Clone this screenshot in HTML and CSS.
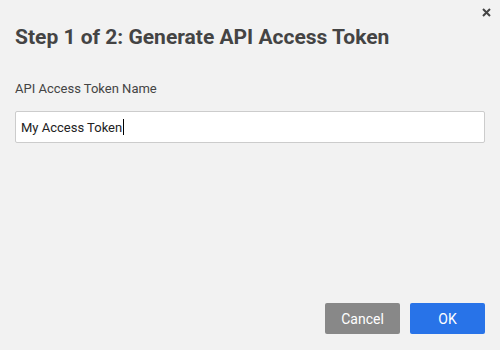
FILE: index.html
```html
<!DOCTYPE html>
<html lang="en">
<head>
  <meta charset="UTF-8" />
  <title>Generate API Access Token</title>
  <link rel="stylesheet" href="styles.css">
</head>
<body>

  <div class="dialog">
    <button class="close" aria-label="Close">
      <svg width="9" height="9" viewBox="0 0 9 9">
        <path d="M1 1 L8 8 M8 1 L1 8" stroke="#444" stroke-width="2" />
      </svg>
    </button>

    <h2 class="title">Step 1 of 2: Generate API Access Token</h2>

    <label class="field-label">API Access Token Name</label>
    <div class="text-input">My Access Token<span class="caret"></span></div>

    <div class="actions">
      <button class="btn btn-cancel">Cancel</button>
      <button class="btn btn-ok">OK</button>
    </div>
  </div>

</body>
</html>
```

FILE: styles.css
```css
body {
  margin: 0;
  font-family: Roboto, 'Liberation Sans', sans-serif;
  background-color: #f2f2f2;
  color: #444;
}
.dialog {
  position: relative;
  height: 350px;
  box-sizing: border-box;
  padding: 25px 15px 16px;
  display: flex;
  flex-direction: column;
}
.close {
  position: absolute;
  top: 8px;
  right: 9px;
  padding: 0;
  border: none;
  background: none;
  width: 9px;
  height: 9px;
  display: flex;
}
.title {
  margin: 0;
  font-size: 21px;
  line-height: 24px;
  font-weight: 700;
  color: #444;
}
.field-label {
  display: block;
  margin-top: 32px;
  font-size: 13px;
  line-height: 16px;
  color: #444;
}
.text-input {
  margin-top: 14px;
  height: 32px;
  box-sizing: border-box;
  border: 1px solid #ccc;
  border-radius: 2px;
  background: #fff;
  padding: 0 5px;
  display: flex;
  align-items: center;
  font-size: 13px;
  color: #222;
}
.caret {
  display: inline-block;
  width: 1px;
  height: 16px;
  margin-left: 1px;
  background: #000;
}
.actions {
  margin-top: auto;
  display: flex;
  justify-content: flex-end;
  gap: 10px;
}
.btn {
  width: 75px;
  height: 31px;
  border: none;
  border-radius: 2px;
  font-family: Roboto, 'Liberation Sans', sans-serif;
  font-size: 14px;
  color: #fff;
  padding: 0;
}
.btn-cancel {
  background: #888;
}
.btn-ok {
  background: #2873e8;
}
```
